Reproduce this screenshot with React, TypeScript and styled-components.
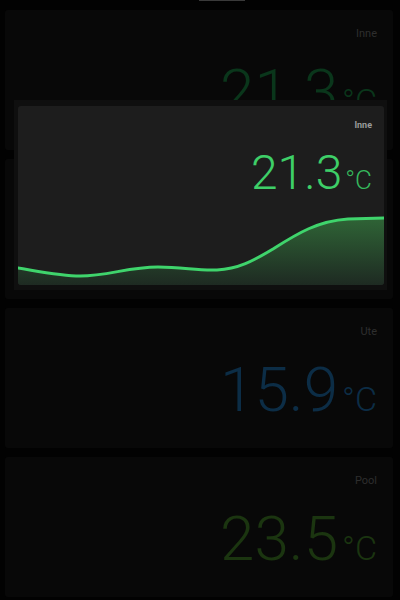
import styled, { createGlobalStyle } from 'styled-components';

const GlobalStyle = createGlobalStyle`
  html, body {
    margin: 0;
    padding: 0;
    background: #000;
  }
  body {
    font-family: Roboto, 'Liberation Sans', sans-serif;
  }
`;

const Screen = styled.div`
  position: relative;
  width: 400px;
  height: 600px;
  overflow: hidden;
  background: #020202;
`;

const ScrollHint = styled.div`
  position: absolute;
  top: 0;
  left: 199px;
  width: 46px;
  height: 1px;
  background: #3a3a3a;
`;

const CardList = styled.div`
  display: flex;
  flex-direction: column;
  gap: 9px;
  padding: 10px 7px 0 5px;
`;

const Card = styled.div`
  height: 140px;
  box-sizing: border-box;
  padding: 18px 16px 0 16px;
  border-radius: 3px;
  background: #080808;
  display: flex;
  flex-direction: column;
  align-items: flex-end;
`;

const Label = styled.div`
  font-size: 11px;
  line-height: 11px;
  color: #2e2e2e;
`;

const Reading = styled.div<{ color: string; size: number; gap: number }>`
  display: flex;
  align-items: baseline;
  gap: ${(props) => props.gap}px;
  color: ${(props) => props.color};
  font-weight: 300;
  font-size: ${(props) => props.size}px;
  line-height: 1;
`;

const Unit = styled.span<{ size: number; color?: string }>`
  font-size: ${(props) => props.size}px;
  color: ${(props) => props.color || 'inherit'};
`;

const Overlay = styled.div`
  position: absolute;
  left: 14px;
  top: 100px;
  width: 373px;
  height: 190px;
  box-sizing: border-box;
  padding: 6px 3px 5px 4px;
  background: #0f0f0f;
`;

const Panel = styled.div`
  height: 100%;
  box-sizing: border-box;
  border-radius: 3px;
  background: #1d1d1d;
  display: flex;
  flex-direction: column;
  align-items: flex-end;
  overflow: hidden;
`;

const PanelHead = styled.div`
  display: flex;
  flex-direction: column;
  align-items: flex-end;
  padding: 15px 12px 0 0;
`;

const PanelLabel = styled.div`
  font-size: 9px;
  line-height: 9px;
  font-weight: 700;
  color: #9a9a9a;
  margin-bottom: 19px;
`;

const Chart = styled.svg`
  display: block;
  width: 100%;
  height: 80px;
  margin-top: auto;
`;

const linePath =
  'M0,63 C30,68 45,71 62,71 C90,71 110,62 140,62 C165,62 180,66 199,65 C220,64 235,56 255,44 C280,28 300,16 330,14 L366,13';

const TempChart = () => (
  <Chart viewBox="0 0 366 80" preserveAspectRatio="none">
    <defs>
      <linearGradient id="fill" x1="0" y1="0" x2="0" y2="1">
        <stop offset="0%" stopColor="#2f6436" />
        <stop offset="100%" stopColor="#1e2a22" />
      </linearGradient>
    </defs>
    <path d={`${linePath} L366,80 L0,80 Z`} fill="url(#fill)" />
    <path d={linePath} fill="none" stroke="#3fd46c" strokeWidth={3} strokeLinecap="round" />
  </Chart>
);

const BgReading = styled(Reading)`
  margin-top: 22px;
`;

const cards = [
  { label: 'Inne', value: '21.3', color: '#0a361b' },
  { label: '', value: '', color: '' },
  { label: 'Ute', value: '15.9', color: '#0c2d46' },
  { label: 'Pool', value: '23.5', color: '#1b3510' },
];

export default function App() {
  return (
    <Screen>
      <GlobalStyle />
      <ScrollHint />
      <CardList>
        {cards.map((c, i) => (
          <Card key={i}>
            {c.label && (
              <>
                <Label>{c.label}</Label>
                <BgReading color={c.color} size={62} gap={4}>
                  {c.value}
                  <Unit size={34}>°C</Unit>
                </BgReading>
              </>
            )}
          </Card>
        ))}
      </CardList>
      <Overlay>
        <Panel>
          <PanelHead>
            <PanelLabel>Inne</PanelLabel>
            <Reading color="#3ecf68" size={48} gap={3}>
              21.3
              <Unit size={26} color="#35b85c">°C</Unit>
            </Reading>
          </PanelHead>
          <TempChart />
        </Panel>
      </Overlay>
    </Screen>
  );
}
